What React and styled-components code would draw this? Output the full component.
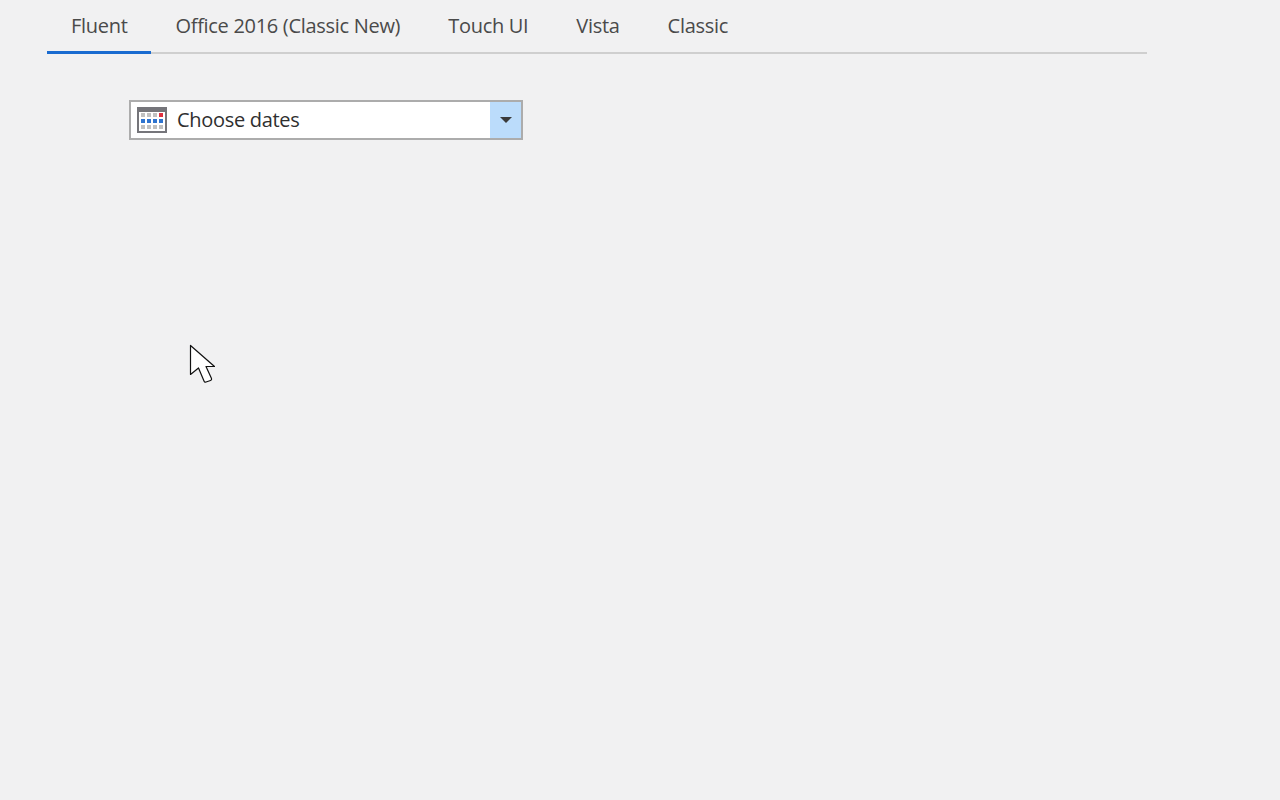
import React from 'react';
import styled, { createGlobalStyle } from 'styled-components';

const GlobalStyle = createGlobalStyle`
  html, body {
    margin: 0;
    height: 100%;
    background-color: #f1f1f2;
  }
`;

const Page = styled.div`
  position: relative;
  width: 1280px;
  height: 800px;
  overflow: hidden;
  box-sizing: border-box;
  padding-left: 47px;
  background-color: #f1f1f2;
  font-family: 'Open Sans', 'Noto Sans', sans-serif;
`;

const TabBar = styled.div`
  display: flex;
  width: 1100px;
  height: 54px;
  box-sizing: border-box;
  border-bottom: 2px solid #cfcfcf;
`;

const Tab = styled.div`
  height: 54px;
  box-sizing: border-box;
  padding: 11px 24px 0;
  font-size: 20px;
  line-height: 30px;
  letter-spacing: -0.3px;
  color: #4a4a4a;
  white-space: nowrap;
  border-bottom: 3px solid ${props => (props.active ? '#1a6bd0' : 'transparent')};
`;

const DateEdit = styled.div`
  display: flex;
  align-items: stretch;
  width: 394px;
  height: 40px;
  box-sizing: border-box;
  margin: 46px 0 0 82px;
  border: 2px solid #acacac;
  background-color: #ffffff;
`;

const CalendarSlot = styled.div`
  display: flex;
  align-items: center;
  padding-left: 6px;
  width: 40px;
  box-sizing: border-box;
`;

const DateText = styled.div`
  flex: 1;
  padding-left: 6px;
  font-size: 20px;
  line-height: 35px;
  letter-spacing: -0.3px;
  color: #2f2f2f;
`;

const DropButton = styled.div`
  display: flex;
  align-items: center;
  justify-content: center;
  width: 31px;
  background-color: #bbdcfb;
`;

const Arrow = styled.div`
  width: 0;
  height: 0;
  border-left: 6px solid transparent;
  border-right: 6px solid transparent;
  border-top: 6px solid #3a3a3a;
`;

const Pointer = styled.svg`
  position: absolute;
  left: 189px;
  top: 344px;
`;

const CalendarIcon = () => (
  <svg width="30" height="26" viewBox="0 0 30 26">
    <rect x="0" y="0" width="30" height="26" fill="#75757a" />
    <rect x="2" y="5" width="26" height="19" fill="#ffffff" />
    {[0, 1, 2, 3].map(i => (
      <React.Fragment key={i}>
        <rect x={4 + i * 6} y="6" width="4" height="4" fill={i === 3 ? '#e0303f' : '#c0c0c0'} />
        <rect x={4 + i * 6} y="12" width="4" height="4" fill="#2f74cf" />
        <rect x={4 + i * 6} y="18" width="4" height="4" fill="#c0c0c0" />
      </React.Fragment>
    ))}
  </svg>
);

const TABS = ['Fluent', 'Office 2016 (Classic New)', 'Touch UI', 'Vista', 'Classic'];

const App = () => (
  <Page>
    <GlobalStyle />
    <TabBar>
      {TABS.map((name, i) => <Tab key={name} active={i === 0}>{name}</Tab>)}
    </TabBar>
    <DateEdit>
      <CalendarSlot><CalendarIcon /></CalendarSlot>
      <DateText>Choose dates</DateText>
      <DropButton><Arrow /></DropButton>
    </DateEdit>
    <Pointer width="28" height="40" viewBox="0 0 28 40">
      <path
        d="M1.5 1.5 V30.5 L9.5 24 L15 37 Q15.5 38.5 17 38 L21.5 36.5 Q23 36 22.5 34.5 L17 22.5 H25.5 Z"
        fill="#ffffff"
        stroke="#111111"
        strokeWidth="1.2"
        strokeLinejoin="round"
      />
    </Pointer>
  </Page>
);

export default App;
